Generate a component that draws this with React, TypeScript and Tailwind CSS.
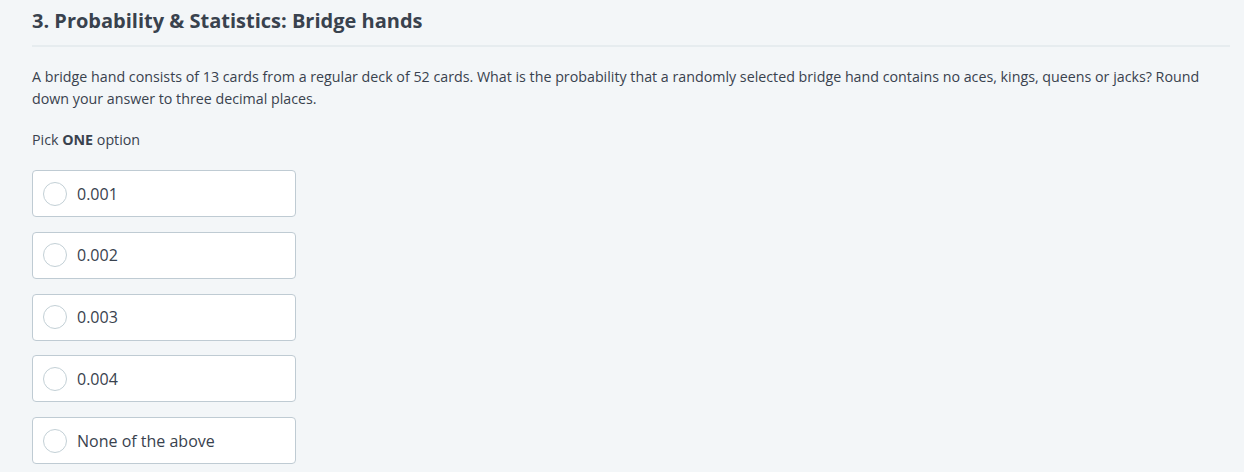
import type { FC } from 'react';

const OPTIONS = ['0.001', '0.002', '0.003', '0.004', 'None of the above'];

const Option: FC<{ label: string }> = ({ label }) => (
  <label className="flex items-center h-[47px] w-[264px] rounded-[4px] border border-[#bfcbd3] bg-white px-[10px] cursor-pointer">
    <span className="w-[24px] h-[24px] rounded-full border border-[#c3d0d6] bg-white shrink-0" />
    <span className="ml-[10px] text-[16px] text-[#39424e]">{label}</span>
  </label>
);

export default function App() {
  return (
    <div
      className="min-h-[472px] bg-[#f3f6f8] pl-[32px] pr-[14px] pt-[7px]"
      style={{ fontFamily: '"Open Sans", "Noto Sans", sans-serif' }}
    >
      <h1 className="text-[20px] leading-[28px] font-bold text-[#39424e]">
        3. Probability &amp; Statistics: Bridge hands
      </h1>
      <div className="mt-[10px] h-[2px] bg-[#e6ecef]" />
      <p className="mt-[19px] text-[14.25px] leading-[22px] text-[#39424e] pr-[16px]">
        A bridge hand consists of 13 cards from a regular deck of 52 cards. What is the probability that a randomly selected bridge hand contains no aces, kings, queens or jacks? Round down your answer to three decimal places.
      </p>
      <p className="mt-[19px] text-[14.25px] leading-[22px] text-[#39424e]">
        Pick <span className="font-bold">ONE</span> option
      </p>
      <div className="mt-[19px] flex flex-col gap-[14.75px]">
        {OPTIONS.map((o) => (
          <Option key={o} label={o} />
        ))}
      </div>
    </div>
  );
}
